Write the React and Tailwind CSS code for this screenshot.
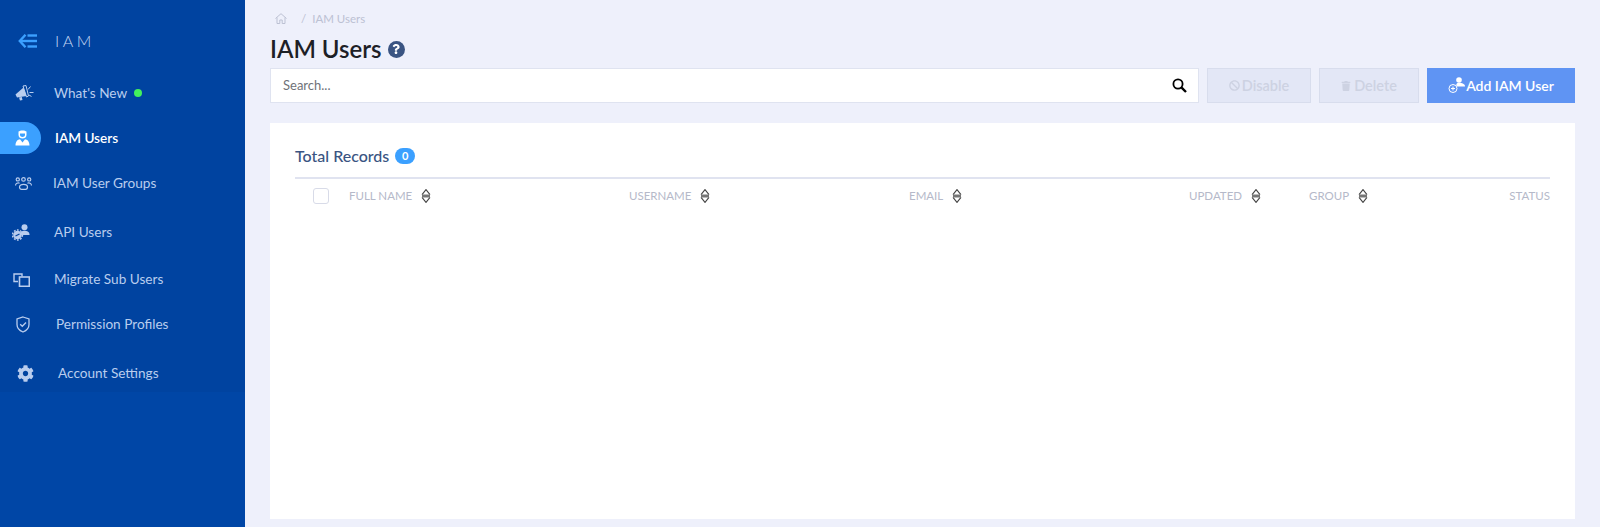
import React from "react";
import { FaCog, FaTrash, FaBan, FaQuestion } from "react-icons/fa";

const BackIcon = () => (
  <svg width="19" height="14" viewBox="0 0 19 14" fill="none" stroke="#3ba0ff" strokeWidth="2.4">
    <path d="M7.5 0.8 L1.8 7 L7.5 13.2" />
    <path d="M2 7 H19" />
    <path d="M9.5 1.5 H19" />
    <path d="M9.5 12.5 H19" />
  </svg>
);

const MegaphoneIcon = () => (
  <svg width="19" height="16" viewBox="0 0 19 16" fill="#b9cdee">
    <path d="M0.5 9.5 L8.5 2.5 L11.5 11 L2 12.5 Z" />
    <path d="M4 12.5 L5 15.5 L7.5 15 L6.8 12 Z" />
    <path d="M8 1 L11 0.5 L13.5 11 L11.5 12 Z" fill="none" stroke="#b9cdee" strokeWidth="1" />
    <path d="M13 4.5 L15.5 1.5 M14.5 7.5 H18.5 M14 10 L16.5 11.5" stroke="#b9cdee" strokeWidth="1" />
  </svg>
);

const UserTieIcon = () => (
  <svg width="15" height="16" viewBox="0 0 15 16" fill="#fff">
    <path d="M3.5 1.5 C5 0 10 0 11.5 1.5 V5 C11.5 7.5 9.5 8.5 7.5 8.5 C5.5 8.5 3.5 7.5 3.5 5 Z M5 3.5 V5 C5 6.3 6.2 7 7.5 7 C8.8 7 10 6.3 10 5 V3.5 Z" fillRule="evenodd" />
    <path d="M0.5 15.5 C0.5 11.5 2.5 9.5 5 9.2 L7.5 12.5 L10 9.2 C12.5 9.5 14.5 11.5 14.5 15.5 Z" />
  </svg>
);

const GroupIcon = () => (
  <svg width="17" height="13" viewBox="0 0 17 13" fill="none" stroke="#b9cdee" strokeWidth="1.2">
    <circle cx="2.8" cy="2.4" r="1.6" />
    <circle cx="8.5" cy="2.4" r="1.8" />
    <circle cx="14.2" cy="2.4" r="1.6" />
    <path d="M0.6 8.5 C0.4 6 3 5.6 4.6 6.2" />
    <path d="M16.4 8.5 C16.6 6 14 5.6 12.4 6.2" />
    <path d="M4.5 10 C4.5 6.5 12.5 6.5 12.5 10 C12.5 11.8 11.5 12.4 10.5 12.4 H6.5 C5.5 12.4 4.5 11.8 4.5 10 Z" />
  </svg>
);

const ApiUserIcon = () => (
  <svg width="18" height="17" viewBox="0 0 18 17" fill="#b9cdee">
    <circle cx="12.5" cy="3.2" r="3" />
    <path d="M8.5 11 C8 8 10 6.8 12.5 6.8 C15 6.8 17.8 8 17.5 11 Z" />
    <circle cx="5.5" cy="11" r="4.3" />
    <circle cx="5.5" cy="11" r="5" fill="none" stroke="#b9cdee" strokeWidth="1.4" strokeDasharray="1.8 1.4" />
    <path d="M3.5 12 L7.5 10" stroke="#0043a0" strokeWidth="1.2" />
  </svg>
);

const MigrateIcon = () => (
  <svg width="17" height="14" viewBox="0 0 17 14" fill="none" stroke="#b9cdee" strokeWidth="1.4">
    <path d="M5 8.5 H1 V1 H9 V3.5" />
    <rect x="6.5" y="4" width="9.8" height="9.3" strokeWidth="1.6" />
  </svg>
);

const ShieldIcon = () => (
  <svg width="14" height="17" viewBox="0 0 14 17" fill="none" stroke="#b9cdee" strokeWidth="1.3">
    <path d="M7 1 L13 3 V8.5 C13 12 10 14.8 7 16 C4 14.8 1 12 1 8.5 V3 Z" />
    <path d="M4.2 8.2 L6.3 10.3 L10 6.5" />
  </svg>
);

const HomeIcon = () => (
  <svg width="12" height="11" viewBox="0 0 12 11" fill="none" stroke="#bcc1d3" strokeWidth="1">
    <path d="M0.5 5.5 L6 0.7 L11.5 5.5" />
    <path d="M2 4.5 V10.5 H4.8 V7 H7.2 V10.5 H10 V4.5" />
  </svg>
);

const SearchIcon = () => (
  <svg width="15" height="15" viewBox="0 0 15 15" fill="none" stroke="#000">
    <circle cx="6" cy="6" r="4.6" strokeWidth="1.8" />
    <path d="M9.6 9.6 L14 14" strokeWidth="2.4" />
  </svg>
);

const AddUserIcon = () => (
  <svg width="18" height="17" viewBox="0 0 18 17" fill="none" stroke="#fff">
    <circle cx="5" cy="11.5" r="4" strokeWidth="1" />
    <path d="M3 11.5 H7 M5 9.5 V13.5" strokeWidth="1" />
    <circle cx="11" cy="3" r="2.8" fill="#fff" stroke="none" />
    <path d="M8.8 9.5 C7.5 7 9 5.8 11 5.8 C14 5.8 17 7 17 9.5 Z" fill="#fff" stroke="none" />
  </svg>
);

const SortIcon = () => (
  <svg width="10" height="14" viewBox="0 0 10 14" fill="none" stroke="#444" strokeWidth="1.1" className="shrink-0">
    <path d="M1 5.6 L5 0.6 L9 5.6" />
    <path d="M1 8.4 L5 13.4 L9 8.4" />
    <path d="M1 7 H9" stroke="#777" strokeWidth="3" />
  </svg>
);

const navItems = [
  { label: "What's New", icon: <MegaphoneIcon />, h: "h-[46px]", box: "w-[54px] pl-[15px]", dot: true },
  { label: "IAM Users", icon: <UserTieIcon />, h: "h-[44px]", box: "w-[55px] pl-[15px]", active: true },
  { label: "IAM User Groups", icon: <GroupIcon />, h: "h-[47px]", box: "w-[53px] pl-[15px]" },
  { label: "API Users", icon: <ApiUserIcon />, h: "h-[51px]", box: "w-[54px] pl-[12px]" },
  { label: "Migrate Sub Users", icon: <MigrateIcon />, h: "h-[43px]", box: "w-[54px] pl-[13px]" },
  { label: "Permission Profiles", icon: <ShieldIcon />, h: "h-[47px]", box: "w-[56px] pl-[16px]" },
  { label: "Account Settings", icon: <FaCog size={17} color="#b9cdee" />, h: "h-[51px]", box: "w-[58px] pl-[17px]" },
];

const columns = [
  { label: "FULL NAME", w: "w-[280px]" },
  { label: "USERNAME", w: "w-[280px]" },
  { label: "EMAIL", w: "w-[280px]" },
  { label: "UPDATED", w: "w-[120px]" },
  { label: "GROUP", w: "w-[100px]" },
];

export default function App() {
  return (
    <div className="flex h-[527px] w-[1600px] overflow-hidden bg-[#eef0fb] font-['Lato',sans-serif]">
      {/* sidebar */}
      <aside className="w-[245px] shrink-0 bg-[#0046a6]">
        <div className="h-[392px] bg-[#0043a0]">
          <div className="flex h-[70px] items-center pt-[11px] pl-[18px]">
            <BackIcon />
            <span className="ml-[18px] text-[16px] font-light tracking-[3.5px] text-[#c5d6f2]">IAM</span>
          </div>
          <nav>
            {navItems.map((item) => (
              <div key={item.label} className={`relative flex items-center ${item.h}`}>
                {item.active && (
                  <div className="absolute top-1/2 left-0 h-[32px] w-[41px] -translate-y-1/2 rounded-r-full bg-[#3ba0ff]" />
                )}
                <div className={`relative flex items-center ${item.box}`}>{item.icon}</div>
                <span className={`text-[13.6px] ${item.active ? "font-semibold text-white" : "text-[#b9cdee]"}`}>
                  {item.label}
                </span>
                {item.dot && <span className="ml-[7px] h-2 w-2 rounded-full bg-[#43f05c]" />}
              </div>
            ))}
          </nav>
        </div>
      </aside>

      {/* main */}
      <main className="flex-1 px-[25px]">
        <div className="flex h-[37px] items-center pl-[5px] text-[11.5px] text-[#bcc1d3]">
          <HomeIcon />
          <span className="ml-[14px]">/</span>
          <span className="ml-[6px]">IAM Users</span>
        </div>
        <div className="flex h-[31px] items-center pb-[7px]">
          <h1 className="text-[24px] leading-none font-semibold text-[#1d2026]">IAM Users</h1>
          <span className="ml-[6px] flex h-[17px] w-[17px] items-center justify-center rounded-full bg-[#3a5482]">
            <FaQuestion size={10} color="#fff" />
          </span>
        </div>
        <div className="flex h-[35px] items-stretch gap-[8px]">
          <div className="flex w-[929px] items-center justify-between border border-[#dfe3f0] bg-white pr-[11px] pl-[12px]">
            <span className="text-[13px] text-[#6f7278]">Search...</span>
            <SearchIcon />
          </div>
          <button className="flex w-[104px] items-center justify-center gap-[2px] border border-[#d8dded] bg-[#e3e7f6] text-[14.5px] font-semibold text-[#cdd2e2]">
            <FaBan size={11} />
            Disable
          </button>
          <button className="flex w-[100px] items-center justify-center gap-[3px] border border-[#d8dded] bg-[#e3e7f6] text-[14.5px] font-semibold text-[#cdd2e2]">
            <FaTrash size={10} />
            Delete
          </button>
          <button className="flex w-[148px] items-center justify-center bg-[#5f94f3] text-[14px] font-semibold text-white">
            <AddUserIcon />
            Add IAM User
          </button>
        </div>

        {/* table card */}
        <section className="mt-[20px] h-[396px] w-[1305px] bg-white px-[25px]">
          <div className="flex h-[54px] items-center pt-[12px]">
            <span className="text-[16px] font-medium text-[#3a5482]">Total Records</span>
            <span className="ml-[6px] flex h-[16px] w-[20px] items-center justify-center rounded-full bg-[#3ba0ff] text-[11px] font-bold text-white">
              0
            </span>
          </div>
          <div className="flex h-[36px] items-center border-t-2 border-[#e0e3f0] pb-[1px] text-[11.5px] text-[#b5b9c9]">
            <div className="w-[54px] pl-[18px]">
              <div className="h-4 w-4 rounded-[3px] border border-[#d8dbe8]" />
            </div>
            {columns.map((col) => (
              <div key={col.label} className={`flex items-center gap-[9px] ${col.w}`}>
                <span>{col.label}</span>
                <SortIcon />
              </div>
            ))}
            <span className="ml-auto">STATUS</span>
          </div>
        </section>
      </main>
    </div>
  );
}
